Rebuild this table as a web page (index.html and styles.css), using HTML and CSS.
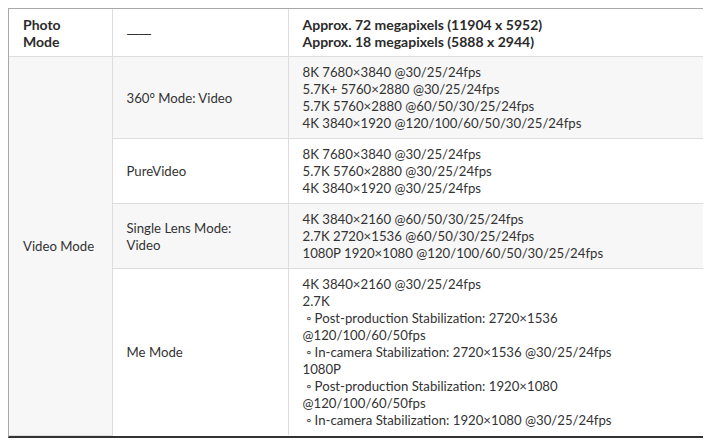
FILE: index.html
```html
<!DOCTYPE html>
<html lang="en">
<head>
    <meta charset="UTF-8">
    <meta name="viewport" content="width=device-width, initial-scale=1.0">
    <title>Specs</title>
    <link rel="stylesheet" href="styles.css">
</head>
<body>
    <div class="frame">
        <table class="spec-table">
            <colgroup>
                <col class="col-mode">
                <col class="col-sub">
                <col>
            </colgroup>
            <tr class="head">
                <th>Photo<br>Mode</th>
                <td class="dash">——</td>
                <th>Approx. 72 megapixels (11904 x 5952)<br>Approx. 18 megapixels (5888 x 2944)</th>
            </tr>
            <tr class="shade">
                <td rowspan="4" class="group">Video Mode</td>
                <td>360° Mode: Video</td>
                <td>8K 7680×3840 @30/25/24fps<br>5.7K+ 5760×2880 @30/25/24fps<br>5.7K 5760×2880 @60/50/30/25/24fps<br>4K 3840×1920 @120/100/60/50/30/25/24fps</td>
            </tr>
            <tr>
                <td>PureVideo</td>
                <td>8K 7680×3840 @30/25/24fps<br>5.7K 5760×2880 @30/25/24fps<br>4K 3840×1920 @30/25/24fps</td>
            </tr>
            <tr class="shade">
                <td>Single Lens Mode:<br>Video</td>
                <td>4K 3840×2160 @60/50/30/25/24fps<br>2.7K 2720×1536 @60/50/30/25/24fps<br>1080P 1920×1080 @120/100/60/50/30/25/24fps</td>
            </tr>
            <tr>
                <td>Me Mode</td>
                <td>4K 3840×2160 @30/25/24fps<br>2.7K<br>&nbsp;◦ Post-production Stabilization: 2720×1536<br>@120/100/60/50fps<br>&nbsp;◦ In-camera Stabilization: 2720×1536 @30/25/24fps<br>1080P<br>&nbsp;◦ Post-production Stabilization: 1920×1080<br>@120/100/60/50fps<br>&nbsp;◦ In-camera Stabilization: 1920×1080 @30/25/24fps</td>
            </tr>
        </table>
    </div>
</body>
</html>
```

FILE: styles.css
```css
body {
    margin: 8px;
    background-color: #fff;
    font-family: "Lato", "Noto Sans", sans-serif;
    font-size: 13.2px;
    color: #333;
}

.frame {
    width: 697px;
    border-top: 1px solid #a8a8a8;
    border-left: 1px solid #a8a8a8;
    border-right: 2px solid #333;
    border-bottom: 2px solid #333;
}

.spec-table {
    width: 100%;
    border-collapse: collapse;
    table-layout: fixed;
}

.col-mode {
    width: 103px;
}

.col-sub {
    width: 176px;
}

.spec-table th,
.spec-table td {
    border: 1px solid #ddd;
    padding: 7px 14px 6px;
    line-height: 17px;
    text-align: left;
    vertical-align: middle;
}

.spec-table tr:first-child th,
.spec-table tr:first-child td {
    border-top: none;
}

.spec-table tr th:first-child,
.spec-table tr td:first-child {
    border-left: none;
}

.spec-table tr th:last-child,
.spec-table tr td:last-child {
    border-right: none;
}

.spec-table tr:last-child td {
    border-bottom: none;
}

.spec-table th {
    font-size: 14px;
    font-weight: bold;
    color: #2b2b2b;
}

.dash {
    font-family: "Noto Sans", sans-serif;
    font-size: 13px;
    letter-spacing: -1px;
    color: #333;
}

.shade td,
.group {
    background-color: #f7f7f7;
}
```
